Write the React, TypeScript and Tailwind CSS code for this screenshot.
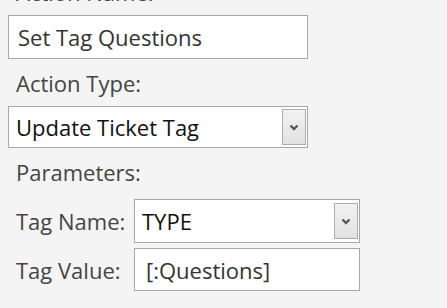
import React from "react";

function Chevron() {
  return (
    <svg width="10" height="7" viewBox="0 0 10 7">
      <path d="M1.5 1.5 L5 5 L8.5 1.5" fill="none" stroke="#555" strokeWidth="2.4" />
    </svg>
  );
}

function Select({ value, className }: { value: string; className: string }) {
  return (
    <div className={`flex items-center bg-white border border-[#a8a8a8] ${className}`}>
      <span className="flex-1 pl-[7px] text-[#111]">{value}</span>
      <div className="mr-[1px] w-[24px] h-[36px] flex items-center justify-center border border-[#adadad] bg-gradient-to-b from-[#f2f2f2] to-[#e2e2e2]">
        <Chevron />
      </div>
    </div>
  );
}

export default function App() {
  return (
    <div
      className="w-[447px] h-[308px] overflow-hidden bg-[#f4f4f4] text-[22px] leading-none text-[#444]"
      style={{ fontFamily: '"Open Sans", "Noto Sans", sans-serif' }}
    >
      <div className="pl-[8px] flex flex-col">
        <div className="pl-[8px] h-[22px] -mt-[19px]">Action Name:</div>
        <div className="mt-[12px] w-[300px] h-[44px] bg-white border border-[#a8a8a8] flex items-center pl-[9px] text-[#333]">
          Set Tag Questions
        </div>
        <div className="pl-[8px] h-[47px] flex items-center">Action Type:</div>
        <Select value="Update Ticket Tag" className="w-[300px] h-[42px]" />
        <div className="pl-[8px] h-[51px] pb-[3px] flex items-center">Parameters:</div>
        <div className="flex items-center">
          <div className="pl-[8px] w-[126px]">Tag Name:</div>
          <Select value="TYPE" className="w-[226px] h-[44px]" />
        </div>
        <div className="flex items-center mt-[5px]">
          <div className="pl-[8px] w-[126px]">Tag Value:</div>
          <div className="w-[226px] h-[43px] bg-white border border-[#a8a8a8] flex items-center pl-[11px] text-[#333]">
            [:Questions]
          </div>
        </div>
      </div>
    </div>
  );
}
